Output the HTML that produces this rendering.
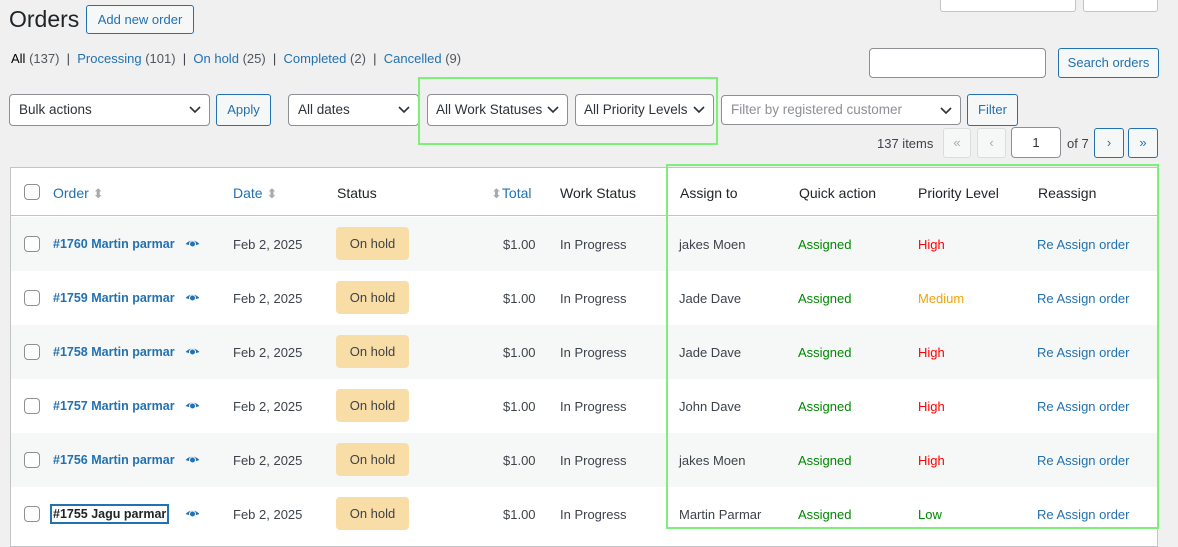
<html><head><style>
body{margin:0;width:1178px;height:538px;background:#f0f0f1;font-family:"Liberation Sans",sans-serif;font-size:13px;color:#3c434a;position:relative;overflow:hidden}
.a{position:absolute;white-space:nowrap}
.btn{position:absolute;border:1px solid #2271b1;border-radius:3px;color:#2271b1;background:#f6f7f7;box-sizing:border-box;text-align:center;font-size:13px}
.sel{position:absolute;border:1px solid #8c8f94;border-radius:4px;background:#fff;box-sizing:border-box;font-size:13.5px;color:#2c3338;padding-left:9px;line-height:30px}
.sel svg{position:absolute;right:8px;top:11px}
a{color:#2271b1;text-decoration:none}
.cb{position:absolute;left:24px;width:16px;height:16px;border:1px solid #8c8f94;border-radius:4px;background:#fff;box-sizing:border-box}
.row{position:absolute;left:11px;width:1146px;height:54px}
.badge{position:absolute;left:336px;width:73px;height:33px;background:#f8dda7;border-radius:4px;text-align:center;line-height:33px;font-size:13px}
.badge span{color:#3c434a}
.srt{color:#a7aaad;font-size:13px}
</style></head><body>
<div class="a" style="left:9px;top:6px;font-size:23px;color:#1d2327">Orders</div>
<div class="btn" style="left:86px;top:5px;width:108px;height:29px;line-height:27px">Add new order</div>
<div class="btn" style="left:940px;top:-18px;width:136px;height:30px;border-color:#c3c4c7;background:#fff"></div>
<div class="btn" style="left:1083px;top:-18px;width:75px;height:30px;border-color:#c3c4c7;background:#fff"></div>
<div class="a" style="left:11px;top:51px;font-size:13px"><b style="color:#000;font-weight:normal">All</b> <span style="color:#50575e">(137)</span> &nbsp;|&nbsp; <a>Processing</a> <span style="color:#50575e">(101)</span> &nbsp;|&nbsp; <a>On hold</a> <span style="color:#50575e">(25)</span> &nbsp;|&nbsp; <a>Completed</a> <span style="color:#50575e">(2)</span> &nbsp;|&nbsp; <a>Cancelled</a> <span style="color:#50575e">(9)</span></div>
<div class="sel" style="left:869px;top:48px;width:177px;height:30px"></div>
<div class="btn" style="left:1058px;top:48px;width:101px;height:30px;line-height:28px">Search orders</div>
<div class="sel" style="left:9px;top:94px;width:201px;height:32px">Bulk actions<svg width="12" height="8"><path d="M1 1l5 5 5-5" stroke="#2c3338" stroke-width="1.6" fill="none"/></svg></div>
<div class="btn" style="left:216px;top:94px;width:55px;height:32px;line-height:30px">Apply</div>
<div class="sel" style="left:288px;top:94px;width:131px;height:32px">All dates<svg width="12" height="8"><path d="M1 1l5 5 5-5" stroke="#2c3338" stroke-width="1.6" fill="none"/></svg></div>
<div class="sel" style="left:427px;top:94px;width:141px;height:32px;padding-left:8px">All Work Statuses<svg width="12" height="8"><path d="M1 1l5 5 5-5" stroke="#2c3338" stroke-width="1.6" fill="none"/></svg></div>
<div class="sel" style="left:575px;top:94px;width:139px;height:32px;padding-left:8px">All Priority Levels<svg width="12" height="8"><path d="M1 1l5 5 5-5" stroke="#2c3338" stroke-width="1.6" fill="none"/></svg></div>
<div class="sel" style="left:721px;top:95px;width:240px;height:30px;color:#8c8f94;line-height:28px">Filter by registered customer<svg width="12" height="8"><path d="M1 1l5 5 5-5" stroke="#2c3338" stroke-width="1.6" fill="none"/></svg></div>
<div class="btn" style="left:967px;top:94px;width:51px;height:32px;line-height:30px">Filter</div>
<div style="position:absolute;left:418px;top:77px;width:300px;height:68px;border:2px solid #7ef07a;box-sizing:border-box"></div>
<div class="a" style="left:877px;top:136px;font-size:13px">137 items</div>
<div class="btn" style="left:943px;top:128px;width:28px;height:30px;border-color:#dcdcde;color:#a7aaad;line-height:28px">«</div>
<div class="btn" style="left:977px;top:128px;width:29px;height:30px;border-color:#dcdcde;color:#a7aaad;line-height:28px">‹</div>
<div class="sel" style="left:1011px;top:127px;width:50px;height:31px;text-align:center;padding:0;font-size:13px">1</div>
<div class="a" style="left:1067px;top:136px">of 7</div>
<div class="btn" style="left:1094px;top:128px;width:30px;height:30px;line-height:28px">›</div>
<div class="btn" style="left:1128px;top:128px;width:30px;height:30px;line-height:28px">»</div>
<div style="position:absolute;left:10px;top:167px;width:1148px;height:380px;background:#fff;border:1px solid #c3c4c7;box-sizing:border-box"></div>
<div style="position:absolute;left:11px;top:215px;width:1146px;height:1px;background:#c3c4c7"></div>
<div class="cb" style="top:184px"></div>
<div class="a" style="left:53px;top:185px;font-size:14px"><a>Order</a> <span class="srt">⬍</span></div>
<div class="a" style="left:233px;top:185px;font-size:14px"><a>Date</a> <span class="srt">⬍</span></div>
<div class="a" style="left:337px;top:185px;font-size:14px;color:#1d2327">Status</div>
<div class="a" style="left:491px;top:185px;font-size:14px"><span class="srt">⬍</span><a>Total</a></div>
<div class="a" style="left:560px;top:185px;font-size:14px;color:#1d2327">Work Status</div>
<div class="a" style="left:680px;top:185px;font-size:14px;color:#1d2327">Assign to</div>
<div class="a" style="left:799px;top:185px;font-size:14px;color:#1d2327">Quick action</div>
<div class="a" style="left:918px;top:185px;font-size:14px;color:#1d2327">Priority Level</div>
<div class="a" style="left:1038px;top:185px;font-size:14px;color:#1d2327">Reassign</div>
<div class="row" style="top:217px;background:#f6f7f7"></div>
<div class="row" style="top:325px;background:#f6f7f7"></div>
<div class="row" style="top:433px;background:#f6f7f7"></div>
<div id="rows"></div>
<script>
var d=[["#1760 Martin parmar","jakes Moen","High","#f00"],["#1759 Martin parmar","Jade Dave","Medium","#f0a30a"],["#1758 Martin parmar","Jade Dave","High","#f00"],["#1757 Martin parmar","John Dave","High","#f00"],["#1756 Martin parmar","jakes Moen","High","#f00"],["#1755 Jagu parmar","Martin Parmar","Low","#080"]];
var h="";d.forEach(function(r,i){var y=217+i*54,t=y+20;
h+='<div class="cb" style="top:'+(y+19)+'px"></div>';
h+='<div class="a" style="left:53px;top:'+t+'px;font-size:12.5px;font-weight:bold;color:#2271b1;'+(i==5?'color:#1d2327;outline:2px solid #2271b1;outline-offset:1px;':'')+'">'+r[0]+'</div>';
h+='<svg class="a" style="left:185px;top:'+(y+22)+'px" width="15" height="10"><path d="M0.5 5Q7.5-2 14.5 5Q7.5 8 0.5 5z" fill="#2271b1"/><circle cx="7.5" cy="5" r="3" fill="#2271b1" stroke="#fff" stroke-width="1"/></svg>';
h+='<div class="a" style="left:233px;top:'+t+'px">Feb 2, 2025</div>';
h+='<div class="badge" style="top:'+(y+10)+'px"><span>On hold</span></div>';
h+='<div class="a" style="left:503px;top:'+t+'px">$1.00</div>';
h+='<div class="a" style="left:560px;top:'+t+'px">In Progress</div>';
h+='<div class="a" style="left:679px;top:'+t+'px">'+r[1]+'</div>';
h+='<div class="a" style="left:798px;top:'+t+'px;color:#080">Assigned</div>';
h+='<div class="a" style="left:918px;top:'+t+'px;color:'+r[3]+'">'+r[2]+'</div>';
h+='<div class="a" style="left:1037px;top:'+t+'px;color:#2271b1">Re Assign order</div>';});
document.getElementById("rows").innerHTML=h;
</script>
<div style="position:absolute;left:666px;top:164px;width:493px;height:365px;border:2px solid #7ef07a;box-sizing:border-box"></div>
</body></html>
